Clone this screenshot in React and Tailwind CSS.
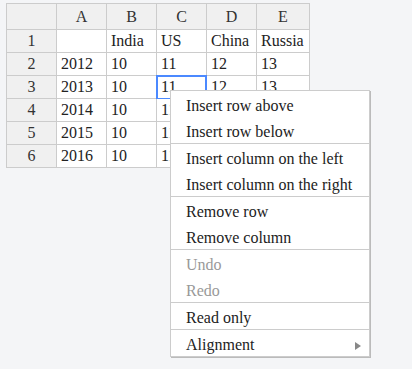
const cols = ['A', 'B', 'C', 'D', 'E']
const widths = ['w-[50px]', 'w-[50px]', 'w-[50px]', 'w-[50px]', 'w-[53px]']

const rows = [
  ['', 'India', 'US', 'China', 'Russia'],
  ['2012', '10', '11', '12', '13'],
  ['2013', '10', '11', '12', '13'],
  ['2014', '10', '11', '12', '13'],
  ['2015', '10', '11', '12', '13'],
  ['2016', '10', '11', '12', '13'],
]

// null = separator
const menu = [
  { label: 'Insert row above' },
  { label: 'Insert row below' },
  null,
  { label: 'Insert column on the left' },
  { label: 'Insert column on the right' },
  null,
  { label: 'Remove row' },
  { label: 'Remove column' },
  null,
  { label: 'Undo', disabled: true },
  { label: 'Redo', disabled: true },
  null,
  { label: 'Read only' },
  null,
  { label: 'Alignment', submenu: true },
]

export default function App() {
  return (
    <div className="relative min-h-[369px] w-[412px] bg-[#f4f5f7] pt-[3px] pl-[6px] font-['Liberation_Serif','Times_New_Roman',serif] text-[16px] text-[#222]">
      {/* Grid */}
      <div className="inline-flex flex-col border-l border-t border-[#ccc] bg-white">
        <div className="flex h-[26px]">
          <div className="w-[50px] border-r border-b border-[#ccc] bg-[#f0f0f0]" />
          {cols.map((c, i) => (
            <div
              key={c}
              className={`${widths[i]} border-r border-b border-[#ccc] bg-[#f0f0f0] text-center leading-[25px] text-[#333]`}
            >
              {c}
            </div>
          ))}
        </div>
        {rows.map((row, r) => (
          <div key={r} className="flex h-[23px]">
            <div className="w-[50px] border-r border-b border-[#ccc] bg-[#f0f0f0] text-center leading-[22px] text-[#333]">
              {r + 1}
            </div>
            {row.map((val, c) => (
              <div
                key={c}
                className={`${widths[c]} relative border-r border-b border-[#ccc] bg-white pl-[4px] leading-[22px] whitespace-nowrap`}
              >
                {val}
                {r === 2 && c === 2 && (
                  <div className="absolute -left-[1px] -top-[1px] h-[25px] w-[51px] border-2 border-[#4b89ff]" />
                )}
              </div>
            ))}
          </div>
        ))}
      </div>

      {/* Context menu */}
      <div className="absolute left-[170px] top-[90px] w-[200px] border border-[#ccc] bg-white shadow-[1px_1px_0_#bbb]">
        {menu.map((item, i) =>
          item === null ? (
            <div key={i} className="border-t border-[#ccc]" />
          ) : (
            <div
              key={i}
              className={`flex h-[26px] items-start justify-between pt-[2px] pl-[15px] pr-[8px] leading-[26px] whitespace-nowrap ${
                item.disabled ? 'text-[#999]' : 'text-[#222]'
              }`}
            >
              <span>{item.label}</span>
              {item.submenu && (
                <svg width="6" height="8" viewBox="0 0 6 8" className="mt-[10px]">
                  <path d="M0 0 L6 4 L0 8 Z" fill="#888" />
                </svg>
              )}
            </div>
          )
        )}
      </div>
    </div>
  )
}
